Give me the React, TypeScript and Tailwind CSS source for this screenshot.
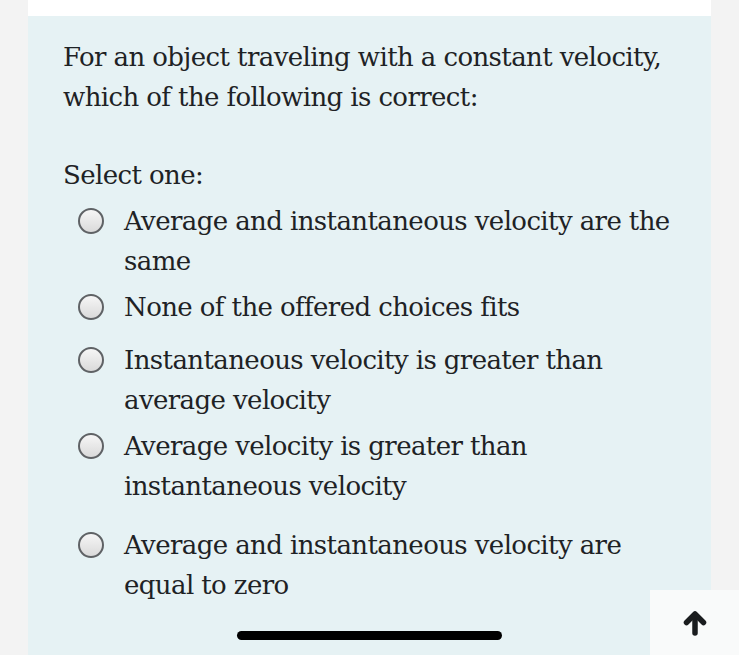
import React from "react";

const font = { fontFamily: '"DejaVu Serif", serif' };

function Radio() {
  return (
    <span className="mt-[7px] h-[26px] w-[26px] shrink-0 rounded-full border-2 border-[#5f6265] bg-gradient-to-b from-[#f6f6f6] to-[#dadada]" />
  );
}

function Option({ lines, mt }: { lines: string[]; mt: string }) {
  return (
    <div className={`flex items-start ${mt}`}>
      <div className="flex w-[61px] shrink-0 pl-[15px]">
        <Radio />
      </div>
      <div className="flex flex-col">
        {lines.map((l, i) => (
          <div key={i} className="h-[40px] leading-[40px] whitespace-nowrap">
            {l}
          </div>
        ))}
      </div>
    </div>
  );
}

export default function App() {
  return (
    <div className="relative h-[655px] w-[739px] overflow-hidden bg-[#f3f3f3]" style={font}>
      <div className="mx-[28px] h-[16px] bg-white" />
      <div className="mx-[28px] h-[639px] bg-[#e6f2f4] pl-[35px] pt-[21px] text-[26px] tracking-[-0.6px] text-[#1e2225]">
        <div className="leading-[40px]">
          <div>For an object traveling with a constant velocity,</div>
          <div>which of the following is correct:</div>
        </div>
        <div className="mt-[38px] leading-[40px]">Select one:</div>
        <div>
          <Option mt="mt-[6px]" lines={["Average and instantaneous velocity are the", "same"]} />
          <Option mt="mt-[6px]" lines={["None of the offered choices fits"]} />
          <Option mt="mt-[13px]" lines={["Instantaneous velocity is greater than", "average velocity"]} />
          <Option mt="mt-[6px]" lines={["Average velocity is greater than", "instantaneous velocity"]} />
          <Option mt="mt-[19px]" lines={["Average and instantaneous velocity are", "equal to zero"]} />
        </div>
      </div>
      <div className="absolute left-[237px] top-[631px] h-[9px] w-[265px] rounded-full bg-black" />
      <div className="absolute left-[650px] top-[590px] flex h-[65px] w-[89px] items-center justify-center bg-[#f9fafa]">
        <svg width="26" height="26" viewBox="0 0 26 26" fill="none" stroke="#1a1c1e" strokeWidth="5.5" strokeLinecap="round" strokeLinejoin="round">
          <path d="M13 23V5" />
          <path d="M4.5 12.5L13 4l8.5 8.5" />
        </svg>
      </div>
    </div>
  );
}
